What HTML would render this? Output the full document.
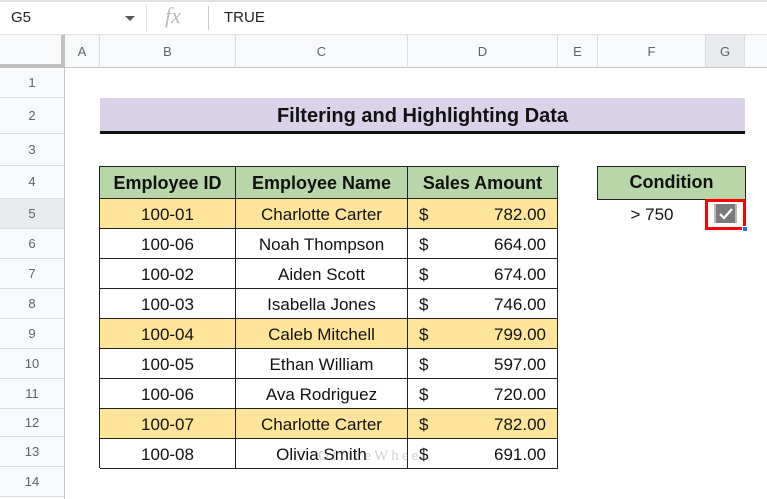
<!DOCTYPE html>
<html><head><meta charset="utf-8"><style>
*{margin:0;padding:0;box-sizing:border-box}
body{width:767px;height:499px;overflow:hidden;background:#fff;font-family:"Liberation Sans",Arial,sans-serif;position:relative}
.a{position:absolute}
.rh{position:absolute;left:0;width:64px;background:#f8f9fa;border-bottom:1px solid #dadce0;color:#5f6368;font-size:13px;text-align:center}
.ch{position:absolute;top:35px;height:33px;background:#f8f9fa;border-right:1px solid #dadce0;border-bottom:1px solid #c4c7c5;color:#5f6368;font-size:13px;text-align:center;line-height:33px}
.c{position:absolute;border-right:1.5px solid #222;border-bottom:1.5px solid #222;font-size:17px;color:#111;text-align:center;line-height:31px}
.h{font-weight:bold;font-size:18px;background:#b7d7a8;line-height:32px}
.y{background:#ffe599}
</style></head><body>
<div class="a" style="left:0;top:0;width:767px;height:35px;border-top:2px solid #e0e0e0;border-bottom:1px solid #e0e0e0"></div>
<div class="a" style="left:11px;top:9px;font-size:15px;color:#222">G5</div>
<div class="a" style="left:125px;top:16px;width:0;height:0;border-left:5px solid transparent;border-right:5px solid transparent;border-top:5px solid #555"></div>
<div class="a" style="left:146px;top:4px;width:1px;height:28px;background:#e0e0e0"></div>
<div class="a" style="left:165px;top:3px;font-family:'Liberation Serif',serif;font-style:italic;font-size:22px;color:#bbb">fx</div>
<div class="a" style="left:208px;top:6px;width:1px;height:24px;background:#ccc"></div>
<div class="a" style="left:224px;top:9px;font-size:15px;color:#222">TRUE</div>
<div class="a" style="left:0;top:35px;width:65px;height:33px;background:#f8f9fa;border-right:4px solid #c0c0c0;border-bottom:4px solid #c0c0c0"></div>
<div class="ch" style="left:65px;width:35px">A</div>
<div class="ch" style="left:100px;width:136px">B</div>
<div class="ch" style="left:236px;width:172px">C</div>
<div class="ch" style="left:408px;width:150px">D</div>
<div class="ch" style="left:558px;width:40px">E</div>
<div class="ch" style="left:598px;width:108px">F</div>
<div class="ch" style="left:706px;width:39px;background:#e8eaed">G</div>
<div class="ch" style="left:745px;width:22px;border-right:none"></div>
<div class="a" style="left:64px;top:68px;width:1px;height:431px;background:#c4c7c5"></div>
<div class="rh" style="top:68px;height:30px;line-height:29px">1</div>
<div class="rh" style="top:98px;height:36px;line-height:35px">2</div>
<div class="rh" style="top:134px;height:32px;line-height:31px">3</div>
<div class="rh" style="top:166px;height:33px;line-height:32px">4</div>
<div class="rh" style="top:199px;height:30px;line-height:29px;background:#e8eaed">5</div>
<div class="rh" style="top:229px;height:30px;line-height:29px">6</div>
<div class="rh" style="top:259px;height:30px;line-height:29px">7</div>
<div class="rh" style="top:289px;height:30px;line-height:29px">8</div>
<div class="rh" style="top:319px;height:30px;line-height:29px">9</div>
<div class="rh" style="top:349px;height:30px;line-height:29px">10</div>
<div class="rh" style="top:379px;height:30px;line-height:29px">11</div>
<div class="rh" style="top:409px;height:28px;line-height:27px">12</div>
<div class="rh" style="top:437px;height:30px;line-height:29px">13</div>
<div class="rh" style="top:467px;height:30px;line-height:29px">14</div>
<div class="a" style="left:100px;top:98px;width:645px;height:36px;background:#d9d2e9;border-bottom:3px solid #111;font-weight:bold;font-size:20px;text-align:center;line-height:36px;color:#111">Filtering and Highlighting Data</div>
<div class="a" style="left:99px;top:166px;width:460px;height:302px;border-left:1.5px solid #222;border-top:1.5px solid #222"></div>
<div class="c h" style="left:100px;top:167px;width:136px;height:32px">Employee ID</div>
<div class="c h" style="left:236px;top:167px;width:172px;height:32px">Employee Name</div>
<div class="c h" style="left:408px;top:167px;width:150px;height:32px">Sales Amount</div>
<div id="rows"></div>
<script>
var d=[["100-01","Charlotte Carter","782.00",1],["100-06","Noah Thompson","664.00",0],["100-02","Aiden Scott","674.00",0],["100-03","Isabella Jones","746.00",0],["100-04","Caleb Mitchell","799.00",1],["100-05","Ethan William","597.00",0],["100-06","Ava Rodriguez","720.00",0],["100-07","Charlotte Carter","782.00",1],["100-08","Olivia Smith","691.00",0]];
var h="";d.forEach(function(r,i){var t=199+i*30,y=r[3]?" y":"";
h+='<div class="c'+y+'" style="left:100px;top:'+t+'px;width:136px;height:30px">'+r[0]+'</div>';
h+='<div class="c'+y+'" style="left:236px;top:'+t+'px;width:172px;height:30px">'+r[1]+'</div>';
h+='<div class="c'+y+'" style="left:408px;top:'+t+'px;width:150px;height:30px;text-align:left;padding-left:11px">$<span style="position:absolute;right:11px">'+r[2]+'</span></div>';});
document.getElementById("rows").innerHTML=h;
</script>
<div class="a" style="left:597px;top:166px;width:149px;height:34px;background:#b7d7a8;border:1.5px solid #222;font-weight:bold;font-size:18px;text-align:center;line-height:31px;color:#111">Condition</div>
<div class="a" style="left:598px;top:205px;width:108px;text-align:center;font-size:17px;color:#111">&gt; 750</div>
<div class="a" style="left:705px;top:199px;width:41px;height:31px;border:3px solid #f00"></div>
<div class="a" style="left:714px;top:204px;width:23px;height:19px;background:#7a7a7a;border-left:2px solid #bbb;border-right:2px solid #bbb"></div>
<svg class="a" style="left:716px;top:205px" width="20" height="17"><path d="M4 9l4 4 8-9" stroke="#fff" stroke-width="2.2" fill="none"/></svg>
<div class="a" style="left:742px;top:226px;width:6px;height:6px;background:#1a73e8;border:1px solid #fff"></div>
<div class="a" style="left:318px;top:448px;font-family:'Liberation Serif',serif;font-size:15px;letter-spacing:3px;color:rgba(120,120,120,.35)">OfficeWheel</div>
</body></html>
